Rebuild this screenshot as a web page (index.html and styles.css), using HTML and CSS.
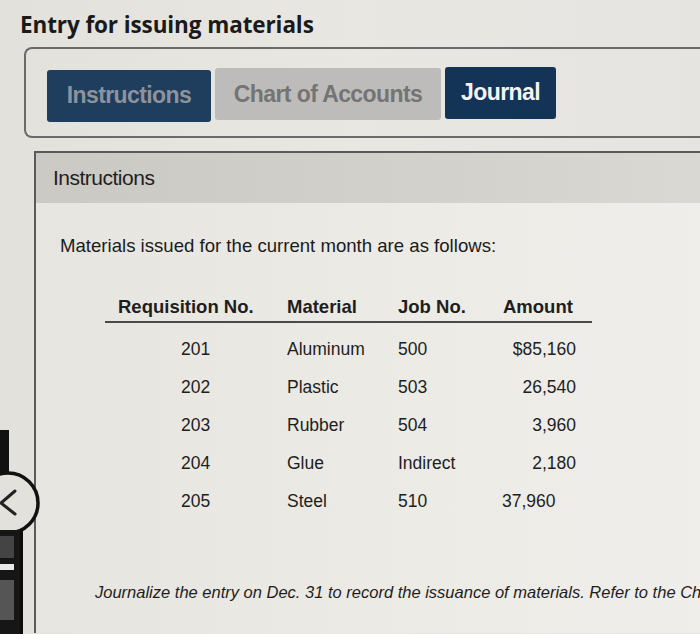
FILE: index.html
```html
<!DOCTYPE html>
<html>
<head>
<meta charset="utf-8">
<link rel="stylesheet" href="styles.css">
</head>
<body>
<div class="page">
  <h1 class="title">Entry for issuing materials</h1>
  <div class="tabbox">
    <div class="tab tab-instr">Instructions</div>
    <div class="tab tab-chart">Chart of Accounts</div>
    <div class="tab tab-journal">Journal</div>
  </div>
  <div class="panel">
    <div class="panel-head">Instructions</div>
    <div class="panel-body">
      <p class="intro">Materials issued for the current month are as follows:</p>
      <div class="table">
        <div class="row head">
          <div class="c1">Requisition No.</div>
          <div class="c2">Material</div>
          <div class="c3">Job No.</div>
          <div class="c4 h4">Amount</div>
        </div>
        <div class="row"><div class="c1 v1">201</div><div class="c2">Aluminum</div><div class="c3">500</div><div class="c4">$85,160</div></div>
        <div class="row"><div class="c1 v1">202</div><div class="c2">Plastic</div><div class="c3">503</div><div class="c4">26,540</div></div>
        <div class="row"><div class="c1 v1">203</div><div class="c2">Rubber</div><div class="c3">504</div><div class="c4">3,960</div></div>
        <div class="row"><div class="c1 v1">204</div><div class="c2">Glue</div><div class="c3">Indirect</div><div class="c4">2,180</div></div>
        <div class="row"><div class="c1 v1">205</div><div class="c2">Steel</div><div class="c3">510</div><div class="c4 last">37,960</div></div>
      </div>
      <p class="note">Journalize the entry on Dec. 31 to record the issuance of materials. Refer to the Ch</p>
    </div>
  </div>
  <div class="sidebar-top"></div>
  <div class="back-btn">
    <svg width="66" height="66" viewBox="0 0 66 66"><circle cx="33" cy="33" r="30" fill="#e2e1dc" stroke="#111" stroke-width="3.5"/><path d="M40 21 L26 33 L40 44" fill="none" stroke="#222" stroke-width="3" stroke-linecap="round" stroke-linejoin="round"/></svg>
  </div>
  <div class="sidebar-bottom">
    <div class="stripe s1"></div>
    <div class="stripe s2"></div>
    <div class="stripe s3"></div>
  </div>
</div>
</body>
</html>
```
FILE: styles.css
```css
html, body {
  margin: 0;
  padding: 0;
}
body {
  width: 700px;
  height: 634px;
  overflow: hidden;
  background: linear-gradient(90deg, #e3e1dc 0%, #e9e7e2 50%, #e6e4e0 100%);
  font-family: "Liberation Sans", Arial, sans-serif;
  color: #1d1d1d;
}
.page {
  position: relative;
  width: 700px;
  height: 634px;
  overflow: hidden;
  padding-top: 10px;
  box-sizing: border-box;
}
.title {
  margin: 0 0 0 20px;
  font-family: "Open Sans", sans-serif;
  font-weight: 700;
  font-size: 22.5px;
  line-height: 29px;
  color: #1a1a1a;
  letter-spacing: -0.1px;
}
.tabbox {
  margin: 8px 0 0 24px;
  height: 91px;
  border: 2px solid #6a6a6a;
  border-right: none;
  border-radius: 8px 0 0 8px;
  display: flex;
  align-items: center;
  gap: 4px;
  padding-left: 21px;
  padding-top: 3px;
  box-sizing: border-box;
}
.tab {
  height: 52px;
  display: flex;
  align-items: center;
  justify-content: center;
  font-weight: 700;
  font-size: 23px;
  border-radius: 3px;
  letter-spacing: -0.6px;
}
.tab-instr {
  width: 164px;
  background: #1f3d5d;
  color: #8d939b;
  margin-top: 3px;
}
.tab-chart {
  width: 226px;
  background: #bdbcba;
  color: #747474;
}
.tab-journal {
  width: 111px;
  background: #133456;
  color: #f4f4f4;
  margin-top: -3px;
}
.panel {
  margin: 13px 0 0 34px;
  border-top: 2px solid #5a5a5a;
  border-left: 2px solid #5a5a5a;
  height: 480px;
}
.panel-head {
  height: 50px;
  background: linear-gradient(90deg, #cbc9c4 0%, #d3d1cc 60%, #dad8d3 100%);
  display: flex;
  align-items: center;
  padding-left: 17px;
  font-size: 21px;
  color: #1e1e1e;
  letter-spacing: -0.5px;
}
.panel-body {
  background: linear-gradient(90deg, #e6e5e0 0%, #ecebe6 60%, #efeeea 100%);
  height: 430px;
  padding-top: 32px;
  box-sizing: border-box;
}
.intro {
  margin: 0 0 0 24px;
  font-size: 18.6px;
  line-height: 22px;
  color: #1b1b1b;
}
.table {
  margin: 40px 0 0 69px;
  width: 487px;
}
.row {
  display: grid;
  grid-template-columns: 165px 115px 100px 107px;
  height: 38px;
  align-items: center;
  font-size: 17.5px;
  color: #1e1e1e;
}
.row.head {
  height: 24px;
  align-items: start;
  font-weight: 700;
  font-size: 18.5px;
  line-height: 20px;
  border-bottom: 2px solid #4a4a4a;
  margin-bottom: 7px;
}
.c1 { padding-left: 13px; }
.v1 { padding-left: 76px; }
.c2 { padding-left: 17px; }
.c3 { padding-left: 13px; }
.c4 { text-align: right; padding-right: 16px; }
.c4.h4 { text-align: left; padding-left: 18px; padding-right: 0; }
.c4.last { text-align: left; padding-left: 17px; padding-right: 0; }
.note {
  margin: 63px 0 0 59px;
  font-size: 16.5px;
  line-height: 19px;
  font-style: italic;
  white-space: nowrap;
  color: #1e1e1e;
}
.sidebar-top {
  position: absolute;
  left: 0;
  top: 430px;
  width: 9px;
  height: 45px;
  background: #111;
}
.back-btn {
  position: absolute;
  left: -25px;
  top: 470px;
  width: 66px;
  height: 66px;
}
.sidebar-bottom {
  position: absolute;
  left: 0;
  top: 530px;
  width: 20px;
  height: 104px;
  background: #161616;
  border-right: 3px solid #0c0c0c;
}
.stripe {
  position: absolute;
  left: 0;
  width: 14px;
  background: #5c5c5c;
}
.s1 { top: 6px; height: 22px; background: #444; }
.s2 { top: 34px; height: 6px; background: #e8e8e8; }
.s3 { top: 50px; height: 40px; background: #555; }
```
